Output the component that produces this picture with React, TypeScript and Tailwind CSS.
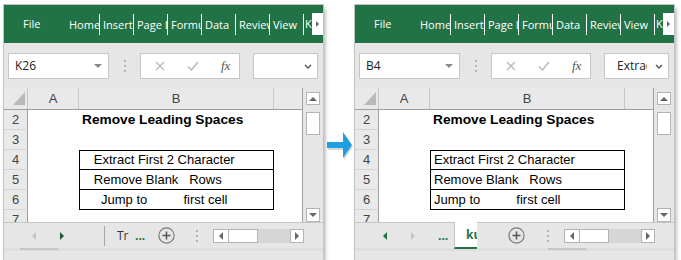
import React from "react";

type Row = { n: number; text?: string; bold?: boolean; box?: "top" | "rest" };

const BEFORE: Row[] = [
  { n: 2, text: "Remove Leading Spaces", bold: true },
  { n: 3 },
  { n: 4, text: "   Extract First 2 Character", box: "top" },
  { n: 5, text: "   Remove Blank   Rows", box: "rest" },
  { n: 6, text: "     Jump to          first cell", box: "rest" },
];

const AFTER: Row[] = [
  { n: 2, text: "Remove Leading Spaces", bold: true },
  { n: 3 },
  { n: 4, text: "Extract First 2 Character", box: "top" },
  { n: 5, text: "Remove Blank   Rows", box: "rest" },
  { n: 6, text: "Jump to          first cell", box: "rest" },
];

const TABS = ["Home", "Insert", "Page Layout", "Formulas", "Data", "Review", "View"];

function Tri({ dir, color }: { dir: "left" | "right" | "up" | "down"; color: string }) {
  const side = dir === "left" || dir === "right";
  const w = side ? 4 : 8;
  const h = side ? 8 : 4;
  const pts = {
    left: "4,0 4,8 0,4",
    right: "0,0 0,8 4,4",
    up: "0,4 8,4 4,0",
    down: "0,0 8,0 4,4",
  }[dir];
  return (
    <svg width={w} height={h} viewBox={`0 0 ${w} ${h}`} className="block shrink-0">
      <polygon points={pts} fill={color} />
    </svg>
  );
}

function Dots() {
  return (
    <div className="flex flex-col gap-[3px]">
      <div className="h-[2px] w-[2px] bg-[#b4b4b4]" />
      <div className="h-[2px] w-[2px] bg-[#b4b4b4]" />
      <div className="h-[2px] w-[2px] bg-[#b4b4b4]" />
    </div>
  );
}

function Ribbon() {
  return (
    <div className="flex h-[38px] items-center bg-[#217346] font-['Open_Sans',sans-serif] text-[11px] text-white">
      <div className="w-[62px] pl-[19px]">File</div>
      {TABS.map((t) => (
        <div
          key={t}
          className="h-[21px] w-[34px] overflow-hidden whitespace-nowrap border-r border-white pl-[3px] leading-[21px]"
        >
          {t}
        </div>
      ))}
      <div className="w-[8px] overflow-hidden pl-[1px]">K</div>
      <div className="flex h-[22px] w-[11px] items-center justify-center bg-white">
        <svg width="3" height="6" viewBox="0 0 3 6" className="block">
          <polygon points="0,0 0,6 3,3" fill="#666" />
        </svg>
      </div>
    </div>
  );
}

function FormulaBar({ name, value }: { name: string; value: string }) {
  return (
    <div className="flex h-[45px] items-start bg-[#e6e6e6] pt-[10px] font-['Open_Sans',sans-serif] text-[12px] text-[#222]">
      <div className="ml-[4px] flex h-[26px] w-[101px] items-center justify-between border border-[#c6c6c6] bg-white pl-[6px] pr-[6px]">
        <span>{name}</span>
        <Tri dir="down" color="#8a8a8a" />
      </div>
      <div className="ml-[15px] pt-[7px]">
        <Dots />
      </div>
      <div className="ml-[14px] flex h-[26px] w-[100px] items-center border border-[#c6c6c6] bg-white">
        <svg width="10" height="10" viewBox="0 0 10 10" className="ml-[14px] block">
          <path d="M1 1L9 9M9 1L1 9" stroke="#b8b8b8" strokeWidth="1.3" />
        </svg>
        <svg width="12" height="10" viewBox="0 0 12 10" className="ml-[22px] block">
          <path d="M1 5.5L4.5 9L11 1" stroke="#b8b8b8" strokeWidth="1.4" fill="none" />
        </svg>
        <span className="ml-[22px] font-['Liberation_Serif',serif] text-[13px] italic text-[#555]">fx</span>
      </div>
      <div className="ml-[13px] flex h-[26px] w-[65px] items-center justify-between border border-[#c6c6c6] bg-white pl-[12px] pr-[5px]">
        <span className="w-[30px] overflow-hidden whitespace-nowrap">{value}</span>
        <svg width="8" height="5" viewBox="0 0 8 5" className="block shrink-0">
          <path d="M1 1L4 4L7 1" stroke="#555" strokeWidth="1.4" fill="none" />
        </svg>
      </div>
    </div>
  );
}

function GridRow({ row }: { row: Row }) {
  const boxCls =
    row.box === "top"
      ? "border border-black"
      : row.box === "rest"
        ? "border-x border-b border-black"
        : "";
  return (
    <div className="flex h-[20px]">
      <div className="flex w-[24px] items-center justify-center border-b border-r border-b-[#d4d4d4] border-r-[#9e9e9e] bg-[#e9e9e9] text-[13px] text-[#444]">
        {row.n}
      </div>
      <div className="w-[51px] bg-white" />
      <div
        className={`flex w-[195px] items-center whitespace-pre bg-white pl-[3px] text-black ${boxCls} ${
          row.bold ? "text-[13.7px] font-bold" : "text-[13px]"
        }`}
      >
        {row.text}
      </div>
      <div className="w-[29px] border-r border-[#9e9e9e] bg-white" />
    </div>
  );
}

function VScroll() {
  return (
    <div className="flex w-[20px] flex-col items-start bg-[#e6e6e6] pl-[3px] pt-[4px]">
      <div className="flex h-[13px] w-[14px] items-center justify-center border border-[#b4b4b4] bg-white">
        <Tri dir="up" color="#666" />
      </div>
      <div className="mt-[7px] h-[23px] w-[14px] border border-[#b4b4b4] bg-white" />
      <div className="mt-[73px] flex h-[14px] w-[14px] items-center justify-center border border-[#b4b4b4] bg-white">
        <Tri dir="down" color="#666" />
      </div>
    </div>
  );
}

function HScroll() {
  return (
    <div className="flex h-[14px] w-[91px] items-stretch">
      <div className="flex w-[16px] items-center justify-center border border-[#b4b4b4] bg-white">
        <Tri dir="left" color="#666" />
      </div>
      <div className="w-[29px] border-y border-r border-[#b4b4b4] bg-white" />
      <div className="w-[32px] bg-[#d6d6d6]" />
      <div className="flex w-[14px] items-center justify-center border border-[#b4b4b4] bg-white">
        <Tri dir="right" color="#666" />
      </div>
    </div>
  );
}

function Plus() {
  return (
    <svg width="17" height="17" viewBox="0 0 17 17" className="block shrink-0">
      <circle cx="8.5" cy="8.5" r="7.6" stroke="#7a7a7a" strokeWidth="1.2" fill="none" />
      <path d="M8.5 4.5V12.5M4.5 8.5H12.5" stroke="#555" strokeWidth="1.5" />
    </svg>
  );
}

function SheetBar({ after }: { after: boolean }) {
  return (
    <div className="flex h-[26px] items-center border-t border-[#c6c6c6] bg-[#e6e6e6] font-['Open_Sans',sans-serif] text-[12px]">
      {after ? (
        <>
          <div className="flex w-[99px] items-center pl-[28px]">
            <Tri dir="left" color="#217346" />
            <div className="ml-[24px]">
              <Tri dir="right" color="#c4c4c4" />
            </div>
            <span className="ml-[23px] font-bold leading-none text-[#217346]">...</span>
          </div>
          <div className="-mt-[1px] flex h-[27px] w-[23px] items-center self-start overflow-hidden border-b-2 border-l border-b-[#217346] border-l-[#c6c6c6] bg-white pl-[11px] font-bold text-[#217346]">
            ku
          </div>
          <div className="ml-[31px]">
            <Plus />
          </div>
          <div className="ml-[22px]">
            <Dots />
          </div>
        </>
      ) : (
        <>
          <div className="flex w-[100px] items-center pl-[28px]">
            <Tri dir="left" color="#c4c4c4" />
            <div className="ml-[24px]">
              <Tri dir="right" color="#1d5e38" />
            </div>
          </div>
          <div className="h-[20px] w-px bg-[#a6a6a6]" />
          <div className="w-[30px] overflow-hidden whitespace-nowrap pl-[12px] text-[#333]">Tr</div>
          <span className="w-[23px] font-bold leading-none text-[#217346]">...</span>
          <Plus />
          <div className="ml-[21px]">
            <Dots />
          </div>
        </>
      )}
      <div className="ml-[15px]">
        <HScroll />
      </div>
    </div>
  );
}

function Window({ after }: { after: boolean }) {
  const rows = after ? AFTER : BEFORE;
  return (
    <div className="w-[319px] shrink-0 bg-[#e6e6e6] shadow-[0_0_0_1px_#c4c4c4,2px_3px_4px_rgba(0,0,0,0.35)]">
      <Ribbon />
      <FormulaBar name={after ? "B4" : "K26"} value={after ? "Extract First 2 Character" : ""} />
      <div className="flex">
        <div className="flex w-[299px] flex-col">
          <div className="flex h-[22px] border-b border-[#9e9e9e] bg-[#e9e9e9] text-[13px] text-[#444]">
            <div className="flex w-[24px] items-end justify-end border-r border-[#c8c8c8] pb-[4px] pr-[2px]">
              <svg width="12" height="13" viewBox="0 0 12 13" className="block">
                <polygon points="12,0 12,13 0,13" fill="#b9b9b9" />
              </svg>
            </div>
            <div className="flex w-[51px] items-center justify-center border-r border-[#c8c8c8]">A</div>
            <div className="flex w-[195px] items-center justify-center border-r border-[#c8c8c8]">B</div>
            <div className="w-[29px] border-r border-[#9e9e9e]" />
          </div>
          {rows.map((r) => (
            <GridRow key={r.n} row={r} />
          ))}
          <div className="h-[12px] overflow-hidden">
            <GridRow row={{ n: 7 }} />
          </div>
        </div>
        <VScroll />
      </div>
      <SheetBar after={after} />
      <div className="flex h-[3px] bg-[#dedede]">
        <div className={`h-[2px] w-[38px] bg-[#c6c6c6] ${after ? "ml-[193px]" : "ml-[16px]"}`} />
      </div>
    </div>
  );
}

export default function App() {
  return (
    <div className="flex h-[260px] w-[681px] bg-white pl-[4px] pt-[5px] font-['Liberation_Sans',Arial,sans-serif]">
      <Window after={false} />
      <div className="w-[32px] shrink-0 pl-[4px] pt-[127px]">
        <svg width="26" height="26" viewBox="0 0 26 26" className="block overflow-visible">
          <path d="M0 10H16V0L25 13L16 26V16H0Z" fill="rgba(0,0,0,0.15)" transform="translate(1 2)" />
          <path d="M0 10H16V0L25 13L16 26V16H0Z" fill="#1e9fe3" />
        </svg>
      </div>
      <Window after />
    </div>
  );
}
